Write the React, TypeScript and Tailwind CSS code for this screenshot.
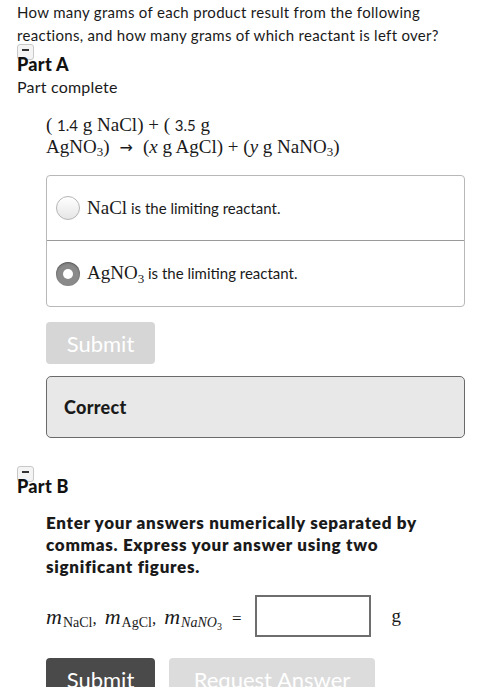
import React from "react";

const serif = "font-['Liberation_Serif','Times_New_Roman',serif]";

function Collapse() {
  return (
    <span className="absolute left-0 -top-[10px] flex h-[16px] w-[17px] items-start justify-center rounded-[3px] border border-[#c8c8c8] bg-[#f4f4f4]">
      <span className="mt-[4px] h-[2px] w-[7px] bg-[#333]" />
    </span>
  );
}

function PartHeading({ label }: { label: string }) {
  return (
    <div className="relative">
      <Collapse />
      <h2 className="relative text-[18px] font-black leading-[20px] tracking-[0.3px] text-[#111]">{label}</h2>
    </div>
  );
}

function Radio({ checked }: { checked?: boolean }) {
  if (checked) {
    return (
      <span className="flex h-[24px] w-[24px] shrink-0 items-center justify-center rounded-full bg-[#8a8a8a] shadow-[inset_0_1px_2px_rgba(0,0,0,0.4)]">
        <span className="h-[10px] w-[10px] rounded-full bg-white" />
      </span>
    );
  }
  return (
    <span className="h-[24px] w-[24px] shrink-0 rounded-full border border-[#b5b5b5] bg-gradient-to-b from-white to-[#e6e6e6]" />
  );
}

// italic m with a roman subscript, MathJax style
function Mass({ sub, italicSub }: { sub: React.ReactNode; italicSub?: boolean }) {
  return (
    <span>
      <i className="text-[22px]">m</i>
      <sub className={`ml-[1px] text-[14px] ${italicSub ? "italic" : ""}`}>{sub}</sub>
    </span>
  );
}

export default function App() {
  return (
    <div className="h-[687px] w-[486px] overflow-hidden bg-white font-['Lato',sans-serif] text-[#1a1a1a]">
      <div className="px-[17px] pt-[1px]">
        <p className="text-[15px] leading-[23px] tracking-[0.3px]">
          How many grams of each product result from the following reactions, and how many grams of which
          reactant is left over?
        </p>

        <div className="mt-[7px]">
          <PartHeading label="Part A" />
          <p className="mt-[3px] text-[16px] leading-[20px] tracking-[0.2px]">Part complete</p>
        </div>

        <div className="pl-[29px] pr-[4px]">
          <div className={`mt-[17px] text-[19px] leading-[22px] ${serif}`}>
            <div>
              ( <span className="font-['Lato',sans-serif] text-[15px]">1.4</span> g NaCl) + ({" "}
              <span className="font-['Lato',sans-serif] text-[15px]">3.5</span> g
            </div>
            <div>
              AgNO<sub className="text-[13px]">3</sub>)
              <span className="mx-[10px] font-['DejaVu_Sans',sans-serif] text-[16px]">→</span>(<i>x</i> g AgCl) + (
              <i>y</i> g NaNO
              <sub className="text-[13px]">3</sub>)
            </div>
          </div>

          {/* answer choices */}
          <div className="mt-[16px] rounded-[4px] border border-[#b8b8b8]">
            <div className="flex h-[65px] items-center gap-[7px] border-b border-[#9a9a9a] px-[9px]">
              <Radio />
              <span className="text-[15px]">
                <span className={`text-[19px] ${serif}`}>NaCl</span> is the limiting reactant.
              </span>
            </div>
            <div className="flex h-[65px] items-center gap-[7px] px-[9px]">
              <Radio checked />
              <span className="text-[15px]">
                <span className={`text-[19px] ${serif}`}>
                  AgNO<sub className="text-[13px]">3</sub>
                </span>{" "}
                is the limiting reactant.
              </span>
            </div>
          </div>

          <button className="mt-[15px] h-[42px] w-[109px] rounded-[4px] bg-[#d6d6d6] text-[22px] text-white">
            Submit
          </button>

          <div className="mt-[12px] flex h-[62px] items-center rounded-[5px] border-[1.5px] border-[#6a6a6a] bg-[#e8e8e8] px-[17px]">
            <span className="text-[18px] font-black tracking-[0.3px]">Correct</span>
          </div>
        </div>

        <div className="mt-[38px]">
          <PartHeading label="Part B" />
        </div>

        <div className="pl-[29px]">
          <p className="mt-[16px] max-w-[400px] text-[17px] font-extrabold leading-[22px] tracking-[0.7px]">
            Enter your answers numerically separated by commas. Express your answer using two significant
            figures.
          </p>

          <div className="mt-[17px] flex items-center">
            <span className={`whitespace-nowrap text-[17px] ${serif}`}>
              <Mass sub="NaCl" />
              <span className="mr-[8px]">,</span>
              <Mass sub="AgCl" />
              <span className="mr-[8px]">,</span>
              <Mass
                italicSub
                sub={
                  <>
                    NaNO<sub className="not-italic text-[10px]">3</sub>
                  </>
                }
              />
              <span className="ml-[10px]">=</span>
            </span>
            <div className="ml-[14px] h-[42px] w-[116px] border-2 border-[#6e6e6e] bg-white" />
            <span className={`ml-[20px] text-[19px] ${serif}`}>g</span>
          </div>

          <div className="mt-[21px] flex gap-[14px]">
            <button className="h-[42px] w-[109px] rounded-[4px] bg-[#4a4a4a] text-[22px] text-white">Submit</button>
            <button className="h-[42px] w-[206px] rounded-[4px] bg-[#dcdcdc] text-[22px] text-white">
              Request Answer
            </button>
          </div>
        </div>
      </div>
    </div>
  );
}
